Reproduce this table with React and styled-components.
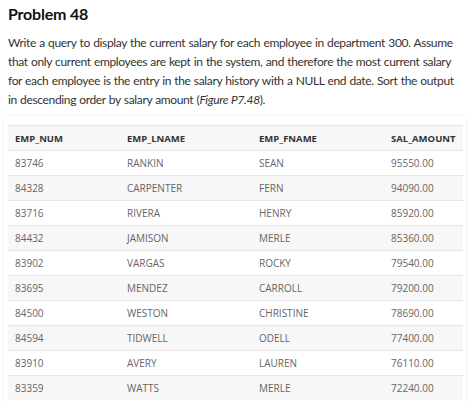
import styled, { createGlobalStyle } from 'styled-components'

const GlobalStyle = createGlobalStyle`
  html, body {
    margin: 0;
    padding: 0;
    background: #ffffff;
  }
  body {
    font-family: Lato, "Noto Sans", sans-serif;
    color: #222;
  }
`

const Page = styled.div`
  padding: 3px 8px 0 8px;
  width: 474px;
  box-sizing: border-box;
`

const Title = styled.h2`
  margin: 0;
  font-family: Lato, "Noto Sans", sans-serif;
  font-size: 16px;
  font-weight: 700;
  line-height: 22px;
  letter-spacing: -0.2px;
  color: #111;
`

const Prompt = styled.p`
  margin: 8px 0 0 0;
  font-size: 12px;
  line-height: 19px;
  color: #333;
  letter-spacing: -0.35px;
  word-spacing: 0.5px;
`

const Line = styled.span`
  display: block;
  white-space: nowrap;
`

const Card = styled.div`
  margin: 7px 0 0 -4px;
  width: 462px;
  box-sizing: border-box;
  padding: 9px 3px 3px 4px;
  box-shadow: 0 0 3px rgba(0, 0, 0, 0.09);
`

const Table = styled.div`
  display: grid;
  grid-template-columns: 112px 132px 132px 79px;
  font-family: "Open Sans", "Noto Sans", sans-serif;
`

const Cell = styled.div`
  height: 25px;
  box-sizing: border-box;
  padding: 0 7px;
  display: flex;
  align-items: center;
  border-top: 1px solid #e6e6e6;
  background: ${(p) => (p.$striped ? '#f7f7f7' : '#ffffff')};
  color: ${(p) => (p.$head ? '#333' : '#666')};
  font-size: ${(p) => (p.$head ? '9.5px' : '10px')};
  font-weight: ${(p) => (p.$head ? 700 : 400)};
  white-space: nowrap;
`

const columns = ['EMP_NUM', 'EMP_LNAME', 'EMP_FNAME', 'SAL_AMOUNT']

const rows = [
  ['83746', 'RANKIN', 'SEAN', '95550.00'],
  ['84328', 'CARPENTER', 'FERN', '94090.00'],
  ['83716', 'RIVERA', 'HENRY', '85920.00'],
  ['84432', 'JAMISON', 'MERLE', '85360.00'],
  ['83902', 'VARGAS', 'ROCKY', '79540.00'],
  ['83695', 'MENDEZ', 'CARROLL', '79200.00'],
  ['84500', 'WESTON', 'CHRISTINE', '78690.00'],
  ['84594', 'TIDWELL', 'ODELL', '77400.00'],
  ['83910', 'AVERY', 'LAUREN', '76110.00'],
  ['83359', 'WATTS', 'MERLE', '72240.00'],
]

export default function App() {
  return (
    <Page>
      <GlobalStyle />
      <Title>Problem 48</Title>
      <Prompt>
        <Line>Write a query to display the current salary for each employee in department 300. Assume</Line>
        <Line>that only current employees are kept in the system, and therefore the most current salary</Line>
        <Line>for each employee is the entry in the salary history with a NULL end date. Sort the output</Line>
        <Line>
          in descending order by salary amount (<i>Figure P7.48</i>).
        </Line>
      </Prompt>
      <Card>
        <Table>
          {columns.map((c) => (
            <Cell key={c} $head $striped>
              {c}
            </Cell>
          ))}
          {rows.map((r, i) =>
            r.map((v, j) => (
              <Cell key={i + '-' + j} $striped={i % 2 === 1}>
                {v}
              </Cell>
            ))
          )}
        </Table>
      </Card>
    </Page>
  )
}
